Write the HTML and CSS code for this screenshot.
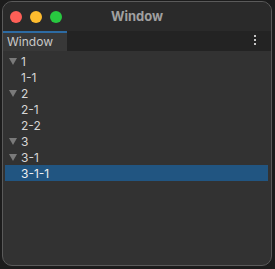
FILE: index.html
```html
<!DOCTYPE html>
<html>
<head>
<meta charset="utf-8">
<link rel="stylesheet" href="styles.css">
</head>
<body>
<div class="window">
  <div class="titlebar">
    <div class="lights">
      <span class="light red"></span>
      <span class="light yellow"></span>
      <span class="light green"></span>
    </div>
    <div class="title">Window</div>
  </div>
  <div class="tabbar">
    <div class="tab">Window</div>
    <div class="kebab"><span></span><span></span><span></span></div>
  </div>
  <div class="tree">
    <div class="row"><span class="arrow"></span><span class="label">1</span></div>
    <div class="row"><span class="noarrow"></span><span class="label">1-1</span></div>
    <div class="row"><span class="arrow"></span><span class="label">2</span></div>
    <div class="row"><span class="noarrow"></span><span class="label">2-1</span></div>
    <div class="row"><span class="noarrow"></span><span class="label">2-2</span></div>
    <div class="row"><span class="arrow"></span><span class="label">3</span></div>
    <div class="row"><span class="arrow"></span><span class="label">3-1</span></div>
    <div class="row selected"><span class="noarrow"></span><span class="label">3-1-1</span></div>
  </div>
</div>
</body>
</html>
```
FILE: styles.css
```css
html, body {
  margin: 0;
  padding: 0;
  background: #1c1c1c;
}
body {
  padding: 1px 2px;
  font-family: Inter, "Liberation Sans", sans-serif;
}
.window {
  width: 270px;
  height: 265px;
  box-sizing: border-box;
  border: 1px solid #5a5a5a;
  border-radius: 10px;
  overflow: hidden;
  background: #323232;
  display: flex;
  flex-direction: column;
}
.titlebar {
  height: 29px;
  background: #2a2a2a;
  display: flex;
  align-items: center;
  position: relative;
}
.lights {
  display: flex;
  gap: 8px;
  padding-left: 7px;
  padding-top: 1px;
}
.light {
  width: 12px;
  height: 12px;
  border-radius: 50%;
  display: block;
}
.red { background: #fe5f57; }
.yellow { background: #febc2e; }
.green { background: #28c840; }
.title {
  position: absolute;
  left: 0;
  right: 0;
  top: 6px;
  text-align: center;
  font-weight: bold;
  font-size: 13px;
  color: #a0a0a0;
}
.tabbar {
  height: 20px;
  background: #232323;
  display: flex;
  align-items: stretch;
  justify-content: space-between;
}
.tab {
  width: 64px;
  box-sizing: border-box;
  border-top: 2px solid #2d6ba3;
  background: #383838;
  color: #c8c8c8;
  font-size: 12px;
  line-height: 17px;
  padding-left: 4px;
}
.kebab {
  display: flex;
  flex-direction: column;
  gap: 2px;
  padding: 4px 15px 0 0;
}
.kebab span {
  width: 2px;
  height: 2px;
  background: #c4c4c4;
}
.tree {
  padding: 2px 3px 0 2px;
}
.row {
  height: 16px;
  display: flex;
  align-items: center;
  color: #d6d6d6;
  font-size: 12px;
}
.arrow, .noarrow {
  width: 8px;
  height: 7px;
  margin: 1px 4px 0 4px;
  flex: none;
}
.arrow {
  background: #7a7a7a;
  clip-path: polygon(0 0, 100% 0, 50% 100%);
}
.selected {
  background: #215581;
  color: #f0f0f0;
}
```
